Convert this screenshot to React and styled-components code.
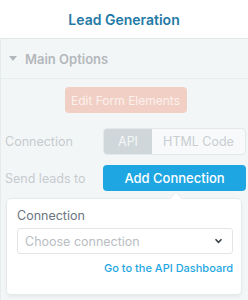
import styled, { createGlobalStyle } from "styled-components";

const Global = createGlobalStyle`
  body {
    margin: 0;
    background: #ffffff;
    font-family: "Inter", "Noto Sans", sans-serif;
  }
`;

export default function App() {
  return (
    <Page>
      <Global />
      <Header>Lead Generation</Header>
      <Panel>
        <SectionHeader>
          <Caret />
          Main Options
        </SectionHeader>
        <Body>
          <EditButton>Edit Form Elements</EditButton>
          <Row>
            <Label>Connection</Label>
            <Toggle>
              <Segment active>API</Segment>
              <Segment>HTML Code</Segment>
            </Toggle>
          </Row>
          <Row>
            <Label>Send leads to</Label>
            <AddButton>Add Connection</AddButton>
            <Popover>
              <PopLabel>Connection</PopLabel>
              <Select>
                <span>Choose connection</span>
                <svg width="9" height="6" viewBox="0 0 10 7">
                  <path d="M1.5 1.5 L5 5 L8.5 1.5" fill="none" stroke="#3a3f44" strokeWidth="1.8" />
                </svg>
              </Select>
              <DashLink>Go to the API Dashboard</DashLink>
            </Popover>
          </Row>
        </Body>
      </Panel>
    </Page>
  );
}

const Page = styled.div`
  width: 248px;
  height: 300px;
  overflow: hidden;
  display: flex;
  flex-direction: column;
`;

const Header = styled.div`
  height: 38px;
  display: flex;
  align-items: center;
  justify-content: center;
  color: #1f7aa6;
  font-size: 14px;
  font-weight: 600;
`;

const Panel = styled.div`
  flex: 1;
  background: #f3f6f7;
  border-top: 1px solid #e3e9eb;
  border-left: 1px solid #e6ebed;
`;

const SectionHeader = styled.div`
  height: 39px;
  display: flex;
  align-items: center;
  gap: 8px;
  padding-left: 8px;
  border-bottom: 1px solid #e7ecee;
  color: #b3b8bc;
  font-size: 13px;
  font-weight: 600;
`;

const Caret = styled.span`
  width: 0;
  height: 0;
  border-left: 4px solid transparent;
  border-right: 4px solid transparent;
  border-top: 5px solid #b3b8bc;
`;

const Body = styled.div`
  display: flex;
  flex-direction: column;
  align-items: center;
  padding: 8px 2px 0 4px;
`;

const EditButton = styled.div`
  width: 122px;
  height: 26px;
  border-radius: 4px;
  background: #f2cfc4;
  color: #fbf1ee;
  font-size: 12px;
  display: flex;
  align-items: center;
  justify-content: center;
  margin-bottom: 15px;
`;

const Row = styled.div`
  position: relative;
  align-self: stretch;
  display: flex;
  align-items: center;
  margin-bottom: 10px;
`;

const Label = styled.div`
  width: 98px;
  color: #c6cbcf;
  font-size: 12.5px;
`;

const Toggle = styled.div`
  flex: 1;
  height: 25px;
  display: flex;
  border: 1px solid #e3e8ea;
  border-radius: 4px;
  overflow: hidden;
  background: #f7f9fa;
`;

const Segment = styled.div`
  width: ${(p) => (p.active ? "48px" : "auto")};
  flex: ${(p) => (p.active ? "none" : "1")};
  display: flex;
  align-items: center;
  justify-content: center;
  background: ${(p) => (p.active ? "#d0d7db" : "transparent")};
  color: ${(p) => (p.active ? "#f4f6f7" : "#c9ced2")};
  font-size: 12.5px;
`;

const AddButton = styled.div`
  flex: 1;
  height: 26px;
  border-radius: 4px;
  background: #1ea6e3;
  color: #ffffff;
  font-size: 13px;
  font-weight: 500;
  display: flex;
  align-items: center;
  justify-content: center;
`;

const Popover = styled.div`
  position: absolute;
  top: 34px;
  left: 2px;
  width: 234px;
  height: 95px;
  box-sizing: border-box;
  background: #ffffff;
  border-radius: 4px;
  box-shadow: 0 0 0 1px #e6eaec, 0 2px 4px rgba(0, 0, 0, 0.07);
  padding: 9px 8px 0 10px;
  z-index: 2;

  &::before {
    content: "";
    position: absolute;
    top: -4px;
    left: 165px;
    width: 8px;
    height: 8px;
    background: #ffffff;
    transform: rotate(45deg);
    box-shadow: -1px -1px 0 0 #eef1f2;
  }
`;

const PopLabel = styled.div`
  color: #6b7581;
  font-size: 12.5px;
  margin-bottom: 5px;
`;

const Select = styled.div`
  height: 26px;
  box-sizing: border-box;
  border: 1px solid #e2e6e9;
  border-radius: 3px;
  display: flex;
  align-items: center;
  justify-content: space-between;
  padding: 0 9px 0 7px;
  color: #b9bec3;
  font-size: 12.5px;
`;

const DashLink = styled.div`
  text-align: right;
  color: #1ea6e3;
  font-size: 11px;
  font-weight: 500;
  margin-top: 7px;
`;
